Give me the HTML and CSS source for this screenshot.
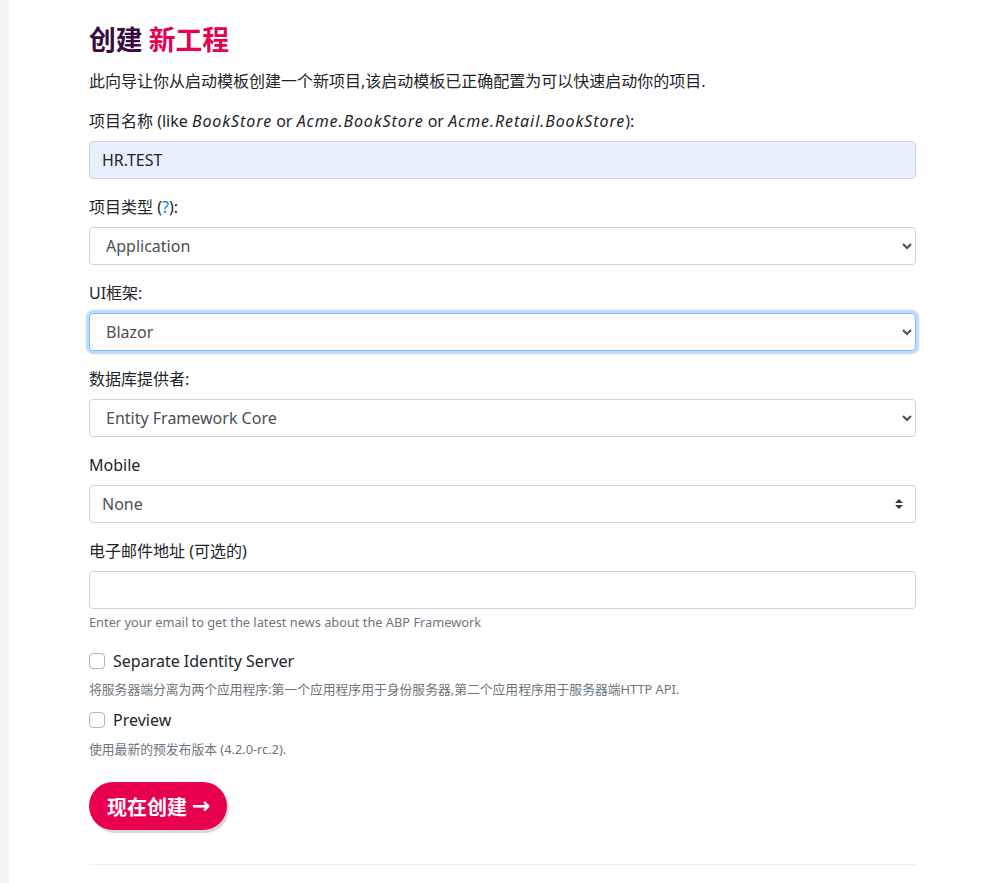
FILE: index.html
```html
<!DOCTYPE html>
<html lang="zh-CN">
<head>
<meta charset="utf-8">
<title>创建 新工程</title>
<link rel="stylesheet" href="styles.css">
</head>
<body>
<div class="page">
  <aside class="strip"></aside>
  <main class="main">
    <div class="content">
      <h1 class="title"><span class="title-dark">创建</span> <span class="title-pink">新工程</span></h1>
      <p class="lead">此向导让你从启动模板创建一个新项目,该启动模板已正确配置为可以快速启动你的项目.</p>

      <div class="group">
        <label class="label">项目名称 (like <i>BookStore</i> or <i>Acme.BookStore</i> or <i>Acme.Retail.BookStore</i>):</label>
        <input class="control autofill" type="text" value="HR.TEST">
      </div>

      <div class="group">
        <label class="label">项目类型 (<a class="link" href="#">?</a>):</label>
        <select class="control native"><option>Application</option></select>
      </div>

      <div class="group">
        <label class="label">UI框架:</label>
        <select class="control native focused"><option>Blazor</option></select>
      </div>

      <div class="group">
        <label class="label">数据库提供者:</label>
        <select class="control native"><option>Entity Framework Core</option></select>
      </div>

      <div class="group">
        <label class="label">Mobile</label>
        <div class="custom-wrap">
          <select class="control custom"><option>None</option></select>
          <svg class="updown" width="8" height="10" viewBox="0 0 4 5"><path fill="#343a40" d="M2 0L0 2h4zm0 5L0 3h4z"/></svg>
        </div>
      </div>

      <div class="group">
        <label class="label">电子邮件地址 (可选的)</label>
        <input class="control" type="text">
        <small class="help">Enter your email to get the latest news about the ABP Framework</small>
      </div>

      <div class="check-row">
        <span class="box"></span><span class="check-label">Separate Identity Server</span>
      </div>
      <small class="help help-first">将服务器端分离为两个应用程序:第一个应用程序用于身份服务器,第二个应用程序用于服务器端HTTP API.</small>

      <div class="check-row">
        <span class="box"></span><span class="check-label">Preview</span>
      </div>
      <small class="help help-last">使用最新的预发布版本 (4.2.0-rc.2).</small>

      <button class="btn" type="button">现在创建 <span class="arrow">→</span></button>

      <hr class="rule">
    </div>
  </main>
</div>
</body>
</html>
```
FILE: styles.css
```css
* { box-sizing: border-box; }
html, body { margin: 0; padding: 0; }
body {
  font-family: "Noto Sans", "Noto Sans CJK SC", sans-serif;
  font-size: 16px;
  line-height: 1.5;
  color: #212529;
  background: #fff;
}
.page {
  display: flex;
  min-height: 883px;
}
.strip {
  width: 9px;
  flex: 0 0 9px;
  background: #f4f5f8;
}
.main {
  flex: 1;
  padding: 22px 0 0 80px;
}
.content {
  width: 827px;
}
.title {
  margin: 0 0 14px;
  font-family: "Noto Sans CJK SC", sans-serif;
  font-size: 26.8px;
  font-weight: 700;
  line-height: 1.25;
}
.title-dark { color: #3a0b3f; }
.title-pink { color: #e6004f; }
.lead {
  margin: 0 0 16px;
}
.group {
  margin-bottom: 16px;
}
.label {
  display: block;
  margin-bottom: 8px;
}
.label i {
  letter-spacing: 0.9px;
}
.link {
  color: #007bff;
  text-decoration: none;
}
.control {
  display: block;
  width: 100%;
  height: 38px;
  padding: 6px 12px;
  font-family: inherit;
  font-size: 16px;
  line-height: 1.5;
  color: #495057;
  background: #fff;
  border: 1px solid #ced4da;
  border-radius: 4px;
  outline: none;
}
.autofill {
  background: #e8f0fe;
  color: #212529;
}
.native {
  padding-left: 12px;
}
.focused {
  border-color: #80bdff;
  box-shadow: 0 0 0 3.2px rgba(0, 123, 255, 0.25);
}
.custom-wrap {
  position: relative;
}
.custom {
  appearance: none;
  -webkit-appearance: none;
  padding: 6px 28px 6px 12px;
}
.updown {
  position: absolute;
  right: 13px;
  top: 14px;
  pointer-events: none;
}
.help {
  display: block;
  margin-top: 4px;
  font-size: 12.8px;
  line-height: 1.5;
  color: #6c757d;
}
.check-row {
  display: flex;
  align-items: center;
  height: 24px;
}
.box {
  width: 16px;
  height: 16px;
  border: 1px solid #adb5bd;
  border-radius: 4px;
  background: #fff;
  margin-right: 8px;
}
.help-first {
  margin: 7px 0 9px;
}
.help-last {
  margin: 8px 0 0;
}
.btn {
  display: flex;
  align-items: center;
  width: fit-content;
  margin-top: 23px;
  height: 48px;
  padding: 0 17px 0 18px;
  border: none;
  border-radius: 24px;
  background: #e8004f;
  color: #fff;
  font-family: "Noto Sans CJK SC", sans-serif;
  font-size: 20px;
  font-weight: 700;
  box-shadow: 2px 3px 0 rgba(0, 0, 0, 0.15);
}
.arrow {
  margin-left: 5px;
  font-family: "DejaVu Sans", sans-serif;
  font-weight: 700;
  font-size: 22px;
  line-height: 1;
}
.rule {
  margin: 34px 0 0;
  border: 0;
  border-top: 1px solid #eeeeee;
}
```
